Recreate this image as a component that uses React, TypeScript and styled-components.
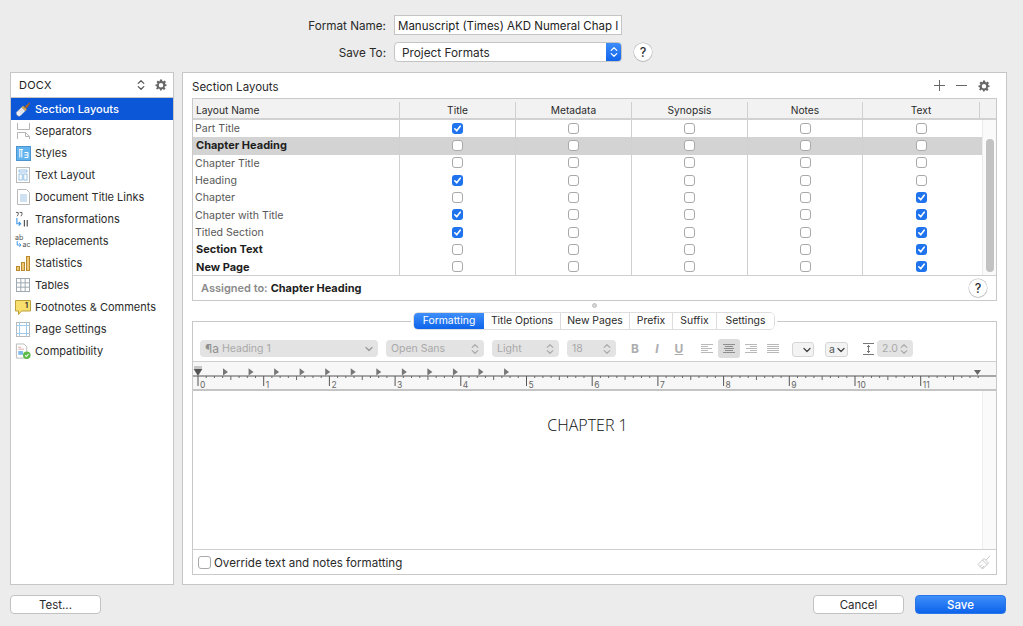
import React from "react";
import styled, { createGlobalStyle } from "styled-components";

const Global = createGlobalStyle`
  html, body { margin: 0; padding: 0; background: #ececec; }
  body { font-family: Inter, "Liberation Sans", sans-serif; font-size: 11px; color: #262626; }
`;

const Page = styled.div`
  width: 1023px; height: 626px; overflow: hidden; background: #ececec;
  display: flex; flex-direction: column;
`;
const Top = styled.div`
  height: 72px; padding-top: 15px; box-sizing: border-box;
  display: flex; flex-direction: column; gap: 7px;
`;
const FormRow = styled.div`display: flex; align-items: center; height: 20px; gap: 8px;`;
const FormLabel = styled.label`width: 386px; text-align: right; font-size: 11.7px; color: #2a2a2a; padding-top: 1px;`;
const NameInput = styled.div`
  width: 228px; height: 20px; box-sizing: border-box; background: #fff;
  border: 1px solid #c4c4c4; padding: 0 3px; line-height: 20px; font-size: 11.5px;
  white-space: nowrap; overflow: hidden; color: #222;
`;
const SaveSelect = styled.div`
  width: 228px; height: 20px; box-sizing: border-box; background: #fff; border-radius: 4px;
  border: 1px solid #c4c4c4; display: flex; align-items: center;
  justify-content: space-between; padding-left: 7px; font-size: 11.8px; overflow: hidden; color: #2a2a2a;
`;
const SaveValue = styled.span`padding-top: 1px;`;
const BlueStepper = styled.span`
  width: 15px; height: 20px; background: linear-gradient(#3f8ffb, #0f63ea);
  display: flex; align-items: center; justify-content: center;
`;
const Help = styled.span`
  width: 18px; height: 18px; border-radius: 50%; background: #fff; box-sizing: border-box;
  box-shadow: 0 0 0 .5px #b5b5b5, 0 1px 1px rgba(0,0,0,.15); font-size: 12.5px; font-weight: 500;
  display: inline-flex; align-items: center; justify-content: center; color: #333; flex: none;
`;
const HelpSlot = styled.span`margin-left: 4px; display: inline-flex;`;

const Main = styled.div`
  height: 513px; padding: 0 16px 0 10px; display: flex; gap: 8px; box-sizing: border-box;
`;
const Side = styled.aside`
  width: 164px; flex: none; background: #fff; border: 1px solid #c6c6c6; box-sizing: border-box;
  display: flex; flex-direction: column;
`;
const SideHead = styled.div`
  height: 25px; box-sizing: border-box; display: flex; align-items: center; padding: 0 6px 0 8px; gap: 10px;
  border-bottom: 1px solid #c6c6c6; flex: none; font-size: 11px; color: #222;
`;
const SideName = styled.span`flex: 1; letter-spacing: .2px;`;
const SideList = styled.div`display: flex; flex-direction: column;`;
const SideRow = styled.div<{ $active?: boolean }>`
  height: 22px; display: flex; align-items: center; gap: 4px; padding-left: 4px;
  font-size: 11px; white-space: nowrap;
  background: ${p => (p.$active ? "#0b57d8" : "transparent")};
  color: ${p => (p.$active ? "#fff" : "#2b2b2b")};
  font-weight: ${p => (p.$active ? 500 : 400)};
`;
const IconBox = styled.span`width: 16px; height: 18px; flex: none; display: flex; align-items: center; justify-content: center;`;

const Panel = styled.section`
  width: 825px; flex: none; background: #fff; border: 1px solid #c6c6c6; box-sizing: border-box;
  padding: 0 9px; display: flex; flex-direction: column;
`;
const PanelHead = styled.div`height: 25px; flex: none; display: flex; align-items: center; justify-content: space-between;`;
const PanelTitle = styled.h2`margin: 3px 0 0; font-size: 11.5px; font-weight: 400; color: #2a2a2a;`;
const PanelTools = styled.div`display: flex; align-items: center; gap: 11px; padding-right: 7px;`;

const TableBox = styled.div`
  height: 203px; flex: none; box-sizing: border-box; border: 1px solid #c9c9c9; display: flex; flex-direction: column;
`;
const Columns = "207px 116px 116px 116px 115px 117px";
const HeadRow = styled.div`
  height: 21px; flex: none; background: #f2f2f2; border-bottom: 2px solid #d2d2d2; display: grid; padding-top: 2px;
  grid-template-columns: ${Columns} 1fr; box-sizing: border-box; align-items: center; font-size: 10.2px; color: #2a2a2a;
`;
const HeadCell = styled.div<{ $left?: boolean }>`
  height: 16px; line-height: 16px; border-right: 1px solid #d0d0d0; text-align: ${p => (p.$left ? "left" : "center")};
  padding-left: ${p => (p.$left ? "3px" : "0")};
`;
const HeadEnd = styled.div``;
const BodyWrap = styled.div`flex: 1; display: flex; min-height: 0; overflow: hidden;`;
const Rows = styled.div`width: 789px; flex: none;`;
const Row = styled.div<{ $selected?: boolean }>`
  height: 17.35px; display: grid; grid-template-columns: ${Columns}; align-items: stretch;
  background: ${p => (p.$selected ? "#d3d3d3" : "transparent")};
`;
const NameCell = styled.div<{ $bold?: boolean }>`
  border-right: 1px solid #d0d0d0; padding-left: ${p => (p.$bold ? "3px" : "2px")}; line-height: 17px;
  font-size: ${p => (p.$bold ? "11px" : "10.6px")};
  font-weight: ${p => (p.$bold ? 700 : 400)}; color: ${p => (p.$bold ? "#1e1e1e" : "#585858")};
`;
const CheckCell = styled.div`
  border-right: 1px solid #d0d0d0; display: flex; align-items: center; justify-content: center;
  &:last-child { border-right: none; }
`;
const Check = styled.span<{ $on?: boolean }>`
  width: 11px; height: 11px; border-radius: 3px; box-sizing: border-box; display: flex; align-items: center; justify-content: center;
  margin-top: -1px;
  background: ${p => (p.$on ? "#1f74ee" : "#fff")};
  border: ${p => (p.$on ? "none" : "1px solid #a9a9a9")};
`;
const Scroll = styled.div`
  flex: 1; background: #fafafa; border-left: 1px solid #ececec; padding: 19px 0 0 3px; box-sizing: border-box;
`;
const Thumb = styled.div`width: 8px; height: 133px; border-radius: 4px; background: #c2c2c2;`;
const AssignBar = styled.div`
  height: 25px; flex: none; border-top: 1px solid #cfcfcf; display: flex; align-items: center; justify-content: space-between;
  padding: 0 9px 0 8px; box-sizing: border-box; font-size: 11px;
`;
const AssignLabel = styled.span`color: #8a8a8a; font-weight: 600;`;
const AssignValue = styled.strong`color: #1e1e1e; font-weight: 700; margin-left: 3px;`;

const Grip = styled.div`height: 12px; flex: none; display: flex; justify-content: center; padding: 2px 1px 0 0; box-sizing: border-box;`;
const GripDot = styled.span`width: 5px; height: 5px; border-radius: 50%; background: #d6d6d6; border: .5px solid #c0c0c0; box-sizing: border-box;`;
const TabRow = styled.div`height: 16px; flex: none; display: flex; justify-content: center; padding-right: 1px; margin-bottom: -8px; position: relative; z-index: 1;`;
const TabGroup = styled.div`
  display: flex; height: 16px; border-radius: 4px; background: #fff; box-shadow: 0 0 0 .5px #bdbdbd, 0 0 0 3px #fff;
  overflow: hidden;
`;
const Tab = styled.div<{ $w: number; $active?: boolean }>`
  width: ${p => p.$w}px; text-align: center; line-height: 16px; font-size: 10.4px; box-sizing: border-box;
  border-right: ${p => (p.$active ? "none" : "1px solid #dcdcdc")};
  background: ${p => (p.$active ? "linear-gradient(#3e8ffa,#0d63ea)" : "#fff")};
  color: ${p => (p.$active ? "#fff" : "#2a2a2a")};
  &:last-child { border-right: none; }
`;
const EditorBox = styled.div`
  height: 254px; flex: none; box-sizing: border-box; border: 1px solid #c9c9c9; display: flex; flex-direction: column;
`;
const FormatBar = styled.div`
  height: 39px; flex: none; box-sizing: border-box; padding: 18px 0 0 7px; display: flex; align-items: flex-start; font-size: 10.5px; color: #a8a8a8;
`;
const GraySelect = styled.div<{ $w: number; $mr?: number }>`
  width: ${p => p.$w}px; margin-right: ${p => p.$mr ?? 8}px; height: 17px; background: #e3e3e3; border-radius: 4px; flex: none;
  display: flex; align-items: center; justify-content: space-between; padding: 0 5px; box-sizing: border-box; white-space: nowrap;
  color: #a9a9a9; font-size: 10.5px;
`;
const StyleMark = styled.span`color: #8f8f8f; margin-right: 3px; font-size: 12px;`;
const StyleName = styled.span`flex: 1;`;
const FormatIcon = styled.span<{ $w: number; $on?: boolean }>`
  width: ${p => p.$w}px; height: 19px; margin-top: -1px; flex: none; display: flex; align-items: center; justify-content: center;
  border-radius: 3px; background: ${p => (p.$on ? "#dcdcdc" : "transparent")}; color: #adadad; font-size: 12px; font-weight: 700;
`;
const Spacer = styled.span<{ $w: number }>`width: ${p => p.$w}px; flex: none;`;
const MiniSelect = styled.span<{ $w: number }>`
  width: ${p => p.$w}px; height: 13px; margin-top: 2px; border: 1px solid #d6d6d6; border-radius: 3px; box-sizing: content-box;
  background: #f3f3f3; flex: none; display: flex; align-items: center; justify-content: flex-end; gap: 2px; padding-right: 2px; color: #555; font-size: 10.5px;
`;
const RulerWrap = styled.div`height: 30px; flex: none; background: #f7f7f7; border-top: 1px solid #cfcfcf; border-bottom: 2px solid #c4c4c4; box-sizing: border-box;`;
const EditorBody = styled.div`flex: 1; display: flex; min-height: 0; border-bottom: 1px solid #cfcfcf;`;
const Sheet = styled.div`
  flex: 1; padding-top: 24px; text-align: center; font-family: "Open Sans", sans-serif; font-weight: 300; font-size: 16px;
  line-height: 20px; color: #0c0c0c;
`;
const Gutter = styled.div`width: 13px; flex: none; background: #fafafa; border-left: 1px solid #ededed;`;
const EditorFoot = styled.div`
  height: 24px; flex: none; display: flex; align-items: center; justify-content: space-between; padding: 1px 4px 0 5px; box-sizing: border-box; font-size: 11.6px; color: #2a2a2a;
`;
const OverrideLabel = styled.label`display: flex; align-items: center; gap: 3px;`;
const BigCheck = styled.span`width: 13px; height: 13px; box-sizing: border-box; border: 1px solid #a9a9a9; border-radius: 3px; background: #fff;`;

const Bottom = styled.div`
  flex: 1; display: flex; align-items: flex-start; padding: 10px 17px 0 10px; gap: 11px;
`;
const Btn = styled.button<{ $primary?: boolean }>`
  width: 91px; height: 19px; padding: 0; border-radius: 4px; font-family: inherit; font-size: 11.5px; box-sizing: border-box;
  border: 1px solid ${p => (p.$primary ? "#2a75e8" : "#c2c2c2")};
  background: ${p => (p.$primary ? "linear-gradient(#3e8ffa,#0d63ea)" : "#fff")};
  color: ${p => (p.$primary ? "#fff" : "#2a2a2a")};
  font-weight: ${p => (p.$primary ? 500 : 400)};
`;
const Push = styled.span`flex: 1;`;

/* ---------- drawings ---------- */
const Updown = ({ c = "#555" }: { c?: string }) => (
  <svg width="8" height="12" viewBox="0 0 8 12" fill="none" stroke={c} strokeWidth="1.2" strokeLinecap="round" strokeLinejoin="round">
    <path d="M1.2 4.4 4 1.7l2.8 2.7M1.2 7.6 4 10.3l2.8-2.7" />
  </svg>
);
const Chevron = ({ c = "#999" }: { c?: string }) => (
  <svg width="8" height="6" viewBox="0 0 8 6" fill="none" stroke={c} strokeWidth="1.3" strokeLinecap="round" strokeLinejoin="round">
    <path d="M1 1.5 4 4.5l3-3" />
  </svg>
);
const Gear = () => (
  <svg width="12" height="12" viewBox="0 0 24 24" fill="#666">
    <path fillRule="evenodd" d="M10 1h4l.6 3.2 1.9.8L19.2 3l2.8 2.8-2 2.7.8 1.9L23 11v3l-3.2.6-.8 1.9 2 2.7L18.2 22l-2.7-2-1.9.8L13 23h-3l-.6-3.2-1.9-.8-2.7 2L2 19.2l2-2.7-.8-1.9L1 14v-3l3.2-.6.8-1.9-2-2.7L5.8 3l2.7 2 .9-.8zM12 8a4.5 4.5 0 1 0 0 9 4.5 4.5 0 0 0 0-9z" />
  </svg>
);
const Tick = () => (
  <svg width="9" height="9" viewBox="0 0 9 9" fill="none" stroke="#fff" strokeWidth="1.6" strokeLinecap="round" strokeLinejoin="round">
    <path d="M1.8 4.8 3.7 6.8 7.2 2.2" />
  </svg>
);
const Brush = () => (
  <svg width="17" height="17" viewBox="0 0 17 17">
    <path d="M1.5 11.5 7 6l4 4-5.500 5.500c-1 .4-2.500 0-3.200-.9-.8-.9-1.100-2.300-.8-3.100z" fill="#eef0f6" stroke="#8a93b8" strokeWidth=".6" />
    <path d="M4 11l3-3M5.500 12.500l3-3" stroke="#aab2d0" strokeWidth=".7" />
    <path d="M7 6l4 4 1.500-1.500-4-4z" fill="#e0ad4a" />
    <path d="M9.500 6l3 1.500 3.500-5.500c.3-.6-.4-1.200-1-.8z" fill="#a4632a" />
  </svg>
);
const Separators = () => (
  <svg width="15" height="17" viewBox="0 0 15 17" fill="none" stroke="#b5b5b5" strokeWidth="1">
    <path d="M1.500 0v6.500h12V0M1.500 16V9.500h8l4 4V16" />
    <path d="M9.500 9.500v4h4" />
  </svg>
);
const Styles = () => (
  <svg width="15" height="15" viewBox="0 0 15 15">
    <rect x=".5" y=".5" width="14" height="14" fill="#62b3ee" stroke="#4b94cf" />
    <path d="M3 3.500h4M3.800 3.500v8M5.800 3.500v8M8.500 6.500h3.500v5H8.500M8.500 9h3.500" fill="none" stroke="#fff" strokeWidth="1" />
  </svg>
);
const TextLayout = () => (
  <svg width="14" height="16" viewBox="0 0 14 16" fill="none">
    <rect x=".5" y=".5" width="13" height="15" fill="#fff" stroke="#b9b9b9" />
    <path d="M3 3h8v2H3z" stroke="#7db4e2" strokeWidth=".8" />
    <rect x="3" y="7" width="3.200" height="6" stroke="#7db4e2" strokeWidth=".8" />
    <rect x="7.800" y="7" width="3.200" height="6" stroke="#7db4e2" strokeWidth=".8" />
  </svg>
);
const DocLinks = () => (
  <svg width="13" height="16" viewBox="0 0 13 16" fill="none">
    <path d="M.5.500h9l3 3v12H.5z" fill="#fff" stroke="#b9b9b9" />
    <path d="M3 6h7M3 8h7M3 10h7M3 12h7" stroke="#9fc4e4" />
  </svg>
);
const Transforms = () => (
  <svg width="17" height="17" viewBox="0 0 17 17" fill="none">
    <path d="M1 1h2.400v2.200L2.300 5M5 1h2.400v2.200L6.300 5" stroke="#555" strokeWidth="1" />
    <path d="M2 7v6h3.500M4 11l2 2-2 2" stroke="#3f97e8" strokeWidth="1.200" />
    <path d="M10 9v7M13 9v7" stroke="#555" strokeWidth="1.300" />
  </svg>
);
const Replacements = () => (
  <svg width="18" height="17" viewBox="0 0 18 17" fill="none">
    <text x="0" y="6.500" fontSize="8" fill="#555" fontFamily="Inter, sans-serif">ab</text>
    <text x="8.500" y="15" fontSize="8" fill="#555" fontFamily="Inter, sans-serif">ac</text>
    <path d="M2.500 8v4.500h4M4.800 10.500l2 2-2 2" stroke="#3f97e8" strokeWidth="1.100" />
  </svg>
);
const Statistics = () => (
  <svg width="14" height="15" viewBox="0 0 14 15" fill="none" stroke="#b98a2d">
    <rect x=".5" y="10.500" width="3" height="4" fill="#f0c775" />
    <rect x="5.500" y="6.500" width="3" height="8" fill="#f0c775" />
    <rect x="10.500" y=".5" width="3" height="14" fill="#f0c775" />
  </svg>
);
const Tables = () => (
  <svg width="14" height="14" viewBox="0 0 14 14" fill="#fff" stroke="#9fa9b2">
    <rect x=".5" y=".5" width="13" height="13" />
    <path d="M4.830.500v13M9.170.500v13M.5 4.830h13M.5 9.170h13" fill="none" />
  </svg>
);
const Footnotes = () => (
  <svg width="16" height="15" viewBox="0 0 16 15">
    <path d="M.5.500h15v10.500H6.500L3.500 14.500V11H.5z" fill="#f7de6d" stroke="#bba13a" />
    <text x="10" y="7.500" fontSize="7" fontWeight="700" fill="#333" fontFamily="Inter, sans-serif">1</text>
  </svg>
);
const PageSettings = () => (
  <svg width="14" height="15" viewBox="0 0 14 15" fill="#fff">
    <rect x=".5" y=".5" width="13" height="14" stroke="#b9b9b9" />
    <path d="M3.500.500v14M10.500.500v14M.5 3.500h13M.5 11.500h13" stroke="#9ccbec" fill="none" />
  </svg>
);
const Compat = () => (
  <svg width="17" height="17" viewBox="0 0 17 17">
    <path d="M1.500.500h8l3 3v12h-11z" fill="#fff" stroke="#b9b9b9" />
    <path d="M3.500 4h3M3.500 6h6" stroke="#c98f8f" strokeWidth=".8" />
    <rect x="3.500" y="8" width="5" height="4" fill="#7db9ea" />
    <circle cx="12.500" cy="12.500" r="4" fill="#5cba47" />
    <path d="M10.700 12.500l1.300 1.400 2.300-2.600" fill="none" stroke="#fff" strokeWidth="1.100" />
  </svg>
);
const Plus = () => (
  <svg width="11" height="11" viewBox="0 0 11 11" stroke="#666" strokeWidth="1"><path d="M5.500 0v11M0 5.500h11" /></svg>
);
const Minus = () => (
  <svg width="11" height="11" viewBox="0 0 11 11" stroke="#666" strokeWidth="1"><path d="M0 5.500h11" /></svg>
);
const Align = ({ kind }: { kind: "l" | "c" | "r" | "j" }) => {
  const long = "M1 2.500h12M1 10.500h12";
  const mid = { l: "M1 4.500h7M1 8.500h7", c: "M3 4.500h8M3 8.500h8", r: "M6 4.500h7M6 8.500h7", j: "M1 4.500h12M1 8.500h12" }[kind];
  const short = { l: "M1 6.500h11", c: "M2 6.500h10", r: "M2 6.500h11", j: "M1 6.500h12" }[kind];
  return (
    <svg width="14" height="13" viewBox="0 0 14 13" fill="none" stroke={kind === "c" ? "#8e8e8e" : "#b9b9b9"} strokeWidth="1">
      <path d={`${long} ${mid} ${short}`} />
    </svg>
  );
};
const LineSpace = () => (
  <svg width="11" height="12" viewBox="0 0 11 12" fill="none" stroke="#777" strokeWidth="1">
    <path d="M0 .5h11M0 11.500h11M5.500 2v8M4 3.500h3M4 8.500h3" />
  </svg>
);
const Ruler = () => {
  const inch = 65.7;
  const x0 = 5;
  const ticks: React.ReactNode[] = [];
  for (let i = 0; i < 12; i++) {
    const x = x0 + i * inch;
    ticks.push(<path key={`m${i}`} d={`M${x} 14v10`} stroke="#555" strokeWidth="1" />);
    ticks.push(<text key={`t${i}`} x={x + 2} y="26" fontSize="8.5" fill="#666" fontFamily="Inter, sans-serif">{i}</text>);
    for (let k = 1; k < 8; k++) {
      const tx = x + (k * inch) / 8;
      ticks.push(<path key={`k${i}-${k}`} d={`M${tx} 14v${k === 4 ? 4 : 2}`} stroke="#666" strokeWidth="1" />);
    }
  }
  const stops = Array.from({ length: 12 }, (_, i) => 30 + i * 25.55);
  return (
    <svg width="803" height="27" viewBox="0 0 803 27" style={{ display: "block" }}>
      <path d="M0 14h803" stroke="#555" strokeWidth="1" />
      {ticks}
      {stops.map(x => <path key={x} d={`M${x} 6.300v7.300l5-3.700z`} fill="#777" />)}
      <path d="M1 5h8M1 7h8l-4 6.500z" fill="#555" stroke="#555" strokeWidth=".6" />
      <path d="M781 8h7l-3.500 5z" fill="#666" />
    </svg>
  );
};

/* ---------- data ---------- */
const nav: [string, React.ReactNode][] = [
  ["Section Layouts", <Brush />], ["Separators", <Separators />], ["Styles", <Styles />],
  ["Text Layout", <TextLayout />], ["Document Title Links", <DocLinks />], ["Transformations", <Transforms />],
  ["Replacements", <Replacements />], ["Statistics", <Statistics />], ["Tables", <Tables />],
  ["Footnotes & Comments", <Footnotes />], ["Page Settings", <PageSettings />], ["Compatibility", <Compat />],
];
const rows: { n: string; b?: boolean; s?: boolean; c: boolean[] }[] = [
  { n: "Part Title", c: [true, false, false, false, false] },
  { n: "Chapter Heading", b: true, s: true, c: [false, false, false, false, false] },
  { n: "Chapter Title", c: [false, false, false, false, false] },
  { n: "Heading", c: [true, false, false, false, false] },
  { n: "Chapter", c: [false, false, false, false, true] },
  { n: "Chapter with Title", c: [true, false, false, false, true] },
  { n: "Titled Section", c: [true, false, false, false, true] },
  { n: "Section Text", b: true, c: [false, false, false, false, true] },
  { n: "New Page", b: true, c: [false, false, false, false, true] },
];
const tabs: [string, number][] = [["Formatting", 70], ["Title Options", 77], ["New Pages", 69], ["Prefix", 43], ["Suffix", 44], ["Settings", 57]];

export default function App() {
  return (
    <Page>
      <Global />
      <Top>
        <FormRow>
          <FormLabel>Format Name:</FormLabel>
          <NameInput>Manuscript (Times) AKD Numeral Chap I</NameInput>
        </FormRow>
        <FormRow>
          <FormLabel>Save To:</FormLabel>
          <SaveSelect>
            <SaveValue>Project Formats</SaveValue>
            <BlueStepper><Updown c="#fff" /></BlueStepper>
          </SaveSelect>
          <HelpSlot><Help>?</Help></HelpSlot>
        </FormRow>
      </Top>
      <Main>
        <Side>
          <SideHead>
            <SideName>DOCX</SideName>
            <Updown />
            <Gear />
          </SideHead>
          <SideList>
            {nav.map(([label, icon], i) => (
              <SideRow key={label} $active={i === 0}>
                <IconBox>{icon}</IconBox>
                {label}
              </SideRow>
            ))}
          </SideList>
        </Side>
        <Panel>
          <PanelHead>
            <PanelTitle>Section Layouts</PanelTitle>
            <PanelTools><Plus /><Minus /><Gear /></PanelTools>
          </PanelHead>
          <TableBox>
            <HeadRow>
              <HeadCell $left>Layout Name</HeadCell>
              <HeadCell>Title</HeadCell>
              <HeadCell>Metadata</HeadCell>
              <HeadCell>Synopsis</HeadCell>
              <HeadCell>Notes</HeadCell>
              <HeadCell>Text</HeadCell>
              <HeadEnd />
            </HeadRow>
            <BodyWrap>
              <Rows>
                {rows.map(r => (
                  <Row key={r.n} $selected={r.s}>
                    <NameCell $bold={r.b}>{r.n}</NameCell>
                    {r.c.map((on, i) => (
                      <CheckCell key={i}><Check $on={on}>{on && <Tick />}</Check></CheckCell>
                    ))}
                  </Row>
                ))}
              </Rows>
              <Scroll><Thumb /></Scroll>
            </BodyWrap>
            <AssignBar>
              <span><AssignLabel>Assigned to:</AssignLabel><AssignValue>Chapter Heading</AssignValue></span>
              <Help>?</Help>
            </AssignBar>
          </TableBox>
          <Grip><GripDot /></Grip>
          <TabRow>
            <TabGroup>
              {tabs.map(([t, w], i) => <Tab key={t} $w={w} $active={i === 0}>{t}</Tab>)}
            </TabGroup>
          </TabRow>
          <EditorBox>
            <FormatBar>
              <GraySelect $w={178}>
                <StyleMark>¶a</StyleMark><StyleName>Heading 1</StyleName><Chevron />
              </GraySelect>
              <GraySelect $w={98}>Open Sans<Updown c="#aaa" /></GraySelect>
              <GraySelect $w={67}>Light<Updown c="#aaa" /></GraySelect>
              <GraySelect $w={49} $mr={8}>18<Updown c="#aaa" /></GraySelect>
              <FormatIcon $w={22}>B</FormatIcon>
              <FormatIcon $w={22}><i>I</i></FormatIcon>
              <FormatIcon $w={22}><u>U</u></FormatIcon>
              <Spacer $w={6} />
              <FormatIcon $w={22}><Align kind="l" /></FormatIcon>
              <FormatIcon $w={22} $on><Align kind="c" /></FormatIcon>
              <FormatIcon $w={22}><Align kind="r" /></FormatIcon>
              <FormatIcon $w={22}><Align kind="j" /></FormatIcon>
              <Spacer $w={8} />
              <MiniSelect $w={18}><Chevron c="#444" /></MiniSelect>
              <Spacer $w={11} />
              <MiniSelect $w={19}>a<Chevron c="#444" /></MiniSelect>
              <Spacer $w={15} />
              <FormatIcon $w={11}><LineSpace /></FormatIcon>
              <Spacer $w={3} />
              <GraySelect $w={36} $mr={0}>2.0<Updown c="#aaa" /></GraySelect>
            </FormatBar>
            <RulerWrap><Ruler /></RulerWrap>
            <EditorBody>
              <Sheet>CHAPTER 1</Sheet>
              <Gutter />
            </EditorBody>
            <EditorFoot>
              <OverrideLabel><BigCheck />Override text and notes formatting</OverrideLabel>
              <IconBox><svg width="15" height="15" viewBox="0 0 15 15" fill="none" stroke="#bdbdbd" strokeWidth=".9"><path d="M1 9.500 5.500 5 10 9.500 5.500 14z" /><path d="M5.500 5 7 3.500l4.500 4.500L10 9.500M9 5l4-4.200M3 11.500l2-2M5 13l2-2" /></svg></IconBox>
            </EditorFoot>
          </EditorBox>
        </Panel>
      </Main>
      <Bottom>
        <Btn>Test...</Btn>
        <Push />
        <Btn>Cancel</Btn>
        <Btn $primary>Save</Btn>
      </Bottom>
    </Page>
  );
}
